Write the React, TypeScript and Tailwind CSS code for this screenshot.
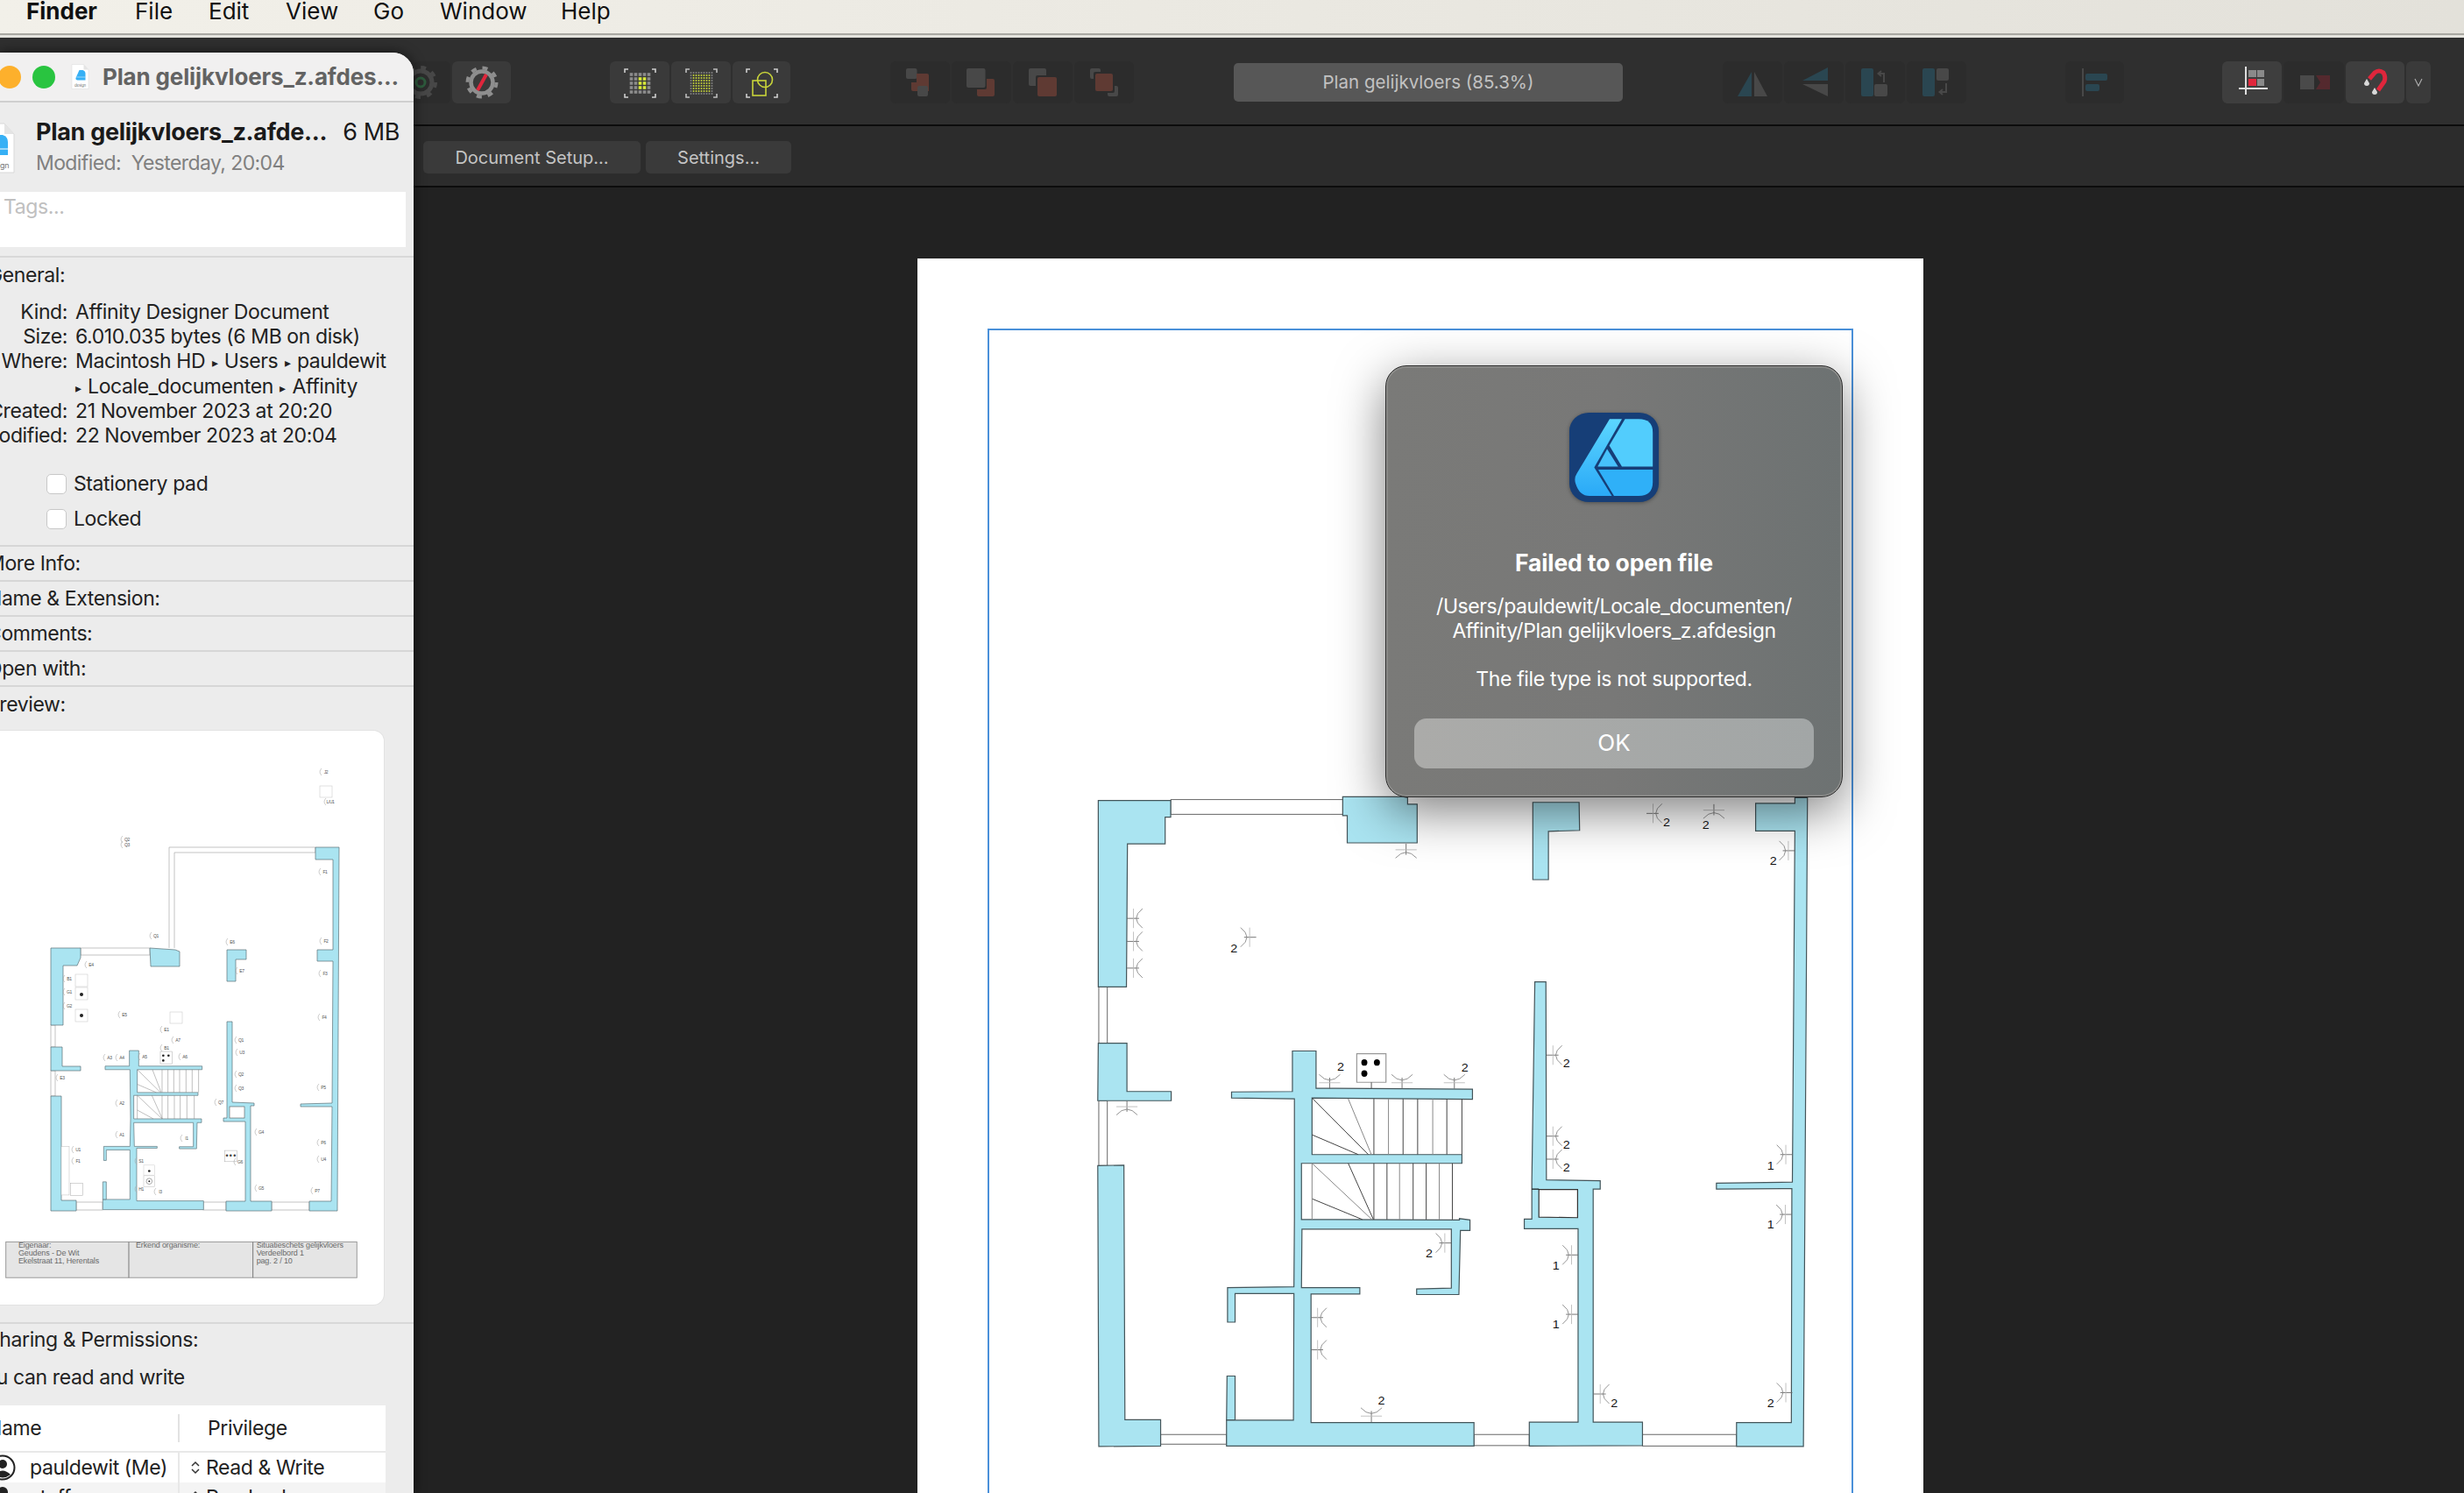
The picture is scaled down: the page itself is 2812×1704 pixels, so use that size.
import React from 'react';

const WALL = '#aae4f1';
const EDGE = '#44555a';

// main plan, coordinates read off the page at 0.574 / 0.5255 scale
const walls = [
  '93,64 237,64 237,100 226,100 226,158 151,158 149,469 93,469',
  '579,56 700,56 708,58 708,72 727,72 727,156 588,156 588,97 579,97',
  '93,591 150,591 150,696 238,696 238,716 92,716',
  '92,857 144,856 146,1409 217,1409 217,1466 94,1467',
  '349,1314 365,1314 365,1410 348,1410',
  '348,1466 840,1466 840,1415 516,1415 516,1136 613,1136 613,1122 497,1122 498,995 795,995 795,1123 726,1125 726,1137 810,1137 813,998 832,998 832,975 811,972 811,975 497,974 497,852 816,852 816,833 518,833 518,710 837,713 837,691 526,689 526,608 479,608 479,696 358,697 358,710 483,712 483,972 482,1120 350,1122 350,1197 365,1197 365,1135 482,1135 481,1410 348,1410',
  '961,458 983,458 984,888 1091,890 1091,908 1077,908 1077,1414 1175,1414 1175,1465 950,1466 950,1414 1047,1414 1047,994 940,994 940,973 955,973 955,890',
  '957,68 1049,68 1050,129 988,131 988,236 957,236',
  '1400,70 1478,70 1478,58 1503,58 1495,1467 1362,1467 1362,1415 1471,1415 1472,907 1322,908 1322,895 1473,893 1478,130 1400,130',
];

const windows = [
  [237, 62, 343, 32],
  [94, 469, 17, 122],
  [94, 716, 17, 141],
  [217, 1441, 131, 21],
  [840, 1441, 110, 24],
  [1175, 1441, 187, 25],
];

const stairLines = [
  [518, 710, 630, 833], [590, 712, 636, 833], [518, 790, 610, 833],
  [641, 712, 641, 833], [670, 712, 670, 833], [699, 712, 699, 833], [728, 712, 728, 833], [758, 712, 758, 833], [786, 712, 786, 833], [816, 712, 816, 833],
  [518, 852, 637, 974], [590, 852, 640, 974], [518, 929, 618, 974], [518, 852, 518, 974],
  [641, 852, 641, 974], [667, 852, 667, 974], [692, 852, 692, 974], [719, 852, 719, 974], [745, 852, 745, 974], [771, 852, 771, 974], [797, 852, 797, 974],
];

const sockets: { x: number; y: number; r: number; n?: string; lx?: number; ly?: number }[] = [
  { x: 150, y: 320, r: 0 }, { x: 150, y: 370, r: 0 }, { x: 150, y: 428, r: 0 },
  { x: 705, y: 158, r: 90 }, { x: 150, y: 716, r: 90 },
  { x: 407, y: 361, r: 180, n: '2', lx: 363, ly: 393 },
  { x: 553, y: 690, r: -90, n: '2', lx: 575, ly: 651 },
  { x: 697, y: 690, r: -90 },
  { x: 801, y: 690, r: -90, n: '2', lx: 822, ly: 652 },
  { x: 795, y: 1025, r: 180, n: '2', lx: 751, ly: 1056 },
  { x: 516, y: 1187, r: 0 }, { x: 516, y: 1257, r: 0 },
  { x: 636, y: 1414, r: -90, n: '2', lx: 656, ly: 1375 },
  { x: 984, y: 617, r: 0, n: '2', lx: 1024, ly: 643 },
  { x: 984, y: 793, r: 0, n: '2', lx: 1024, ly: 820 },
  { x: 984, y: 843, r: 0, n: '2', lx: 1024, ly: 870 },
  { x: 1047, y: 1051, r: 180, n: '1', lx: 1003, ly: 1083 },
  { x: 1047, y: 1180, r: 180, n: '1', lx: 1003, ly: 1210 },
  { x: 1078, y: 1353, r: 0, n: '2', lx: 1119, ly: 1381 },
  { x: 1183, y: 92, r: 0, n: '2', lx: 1223, ly: 119 },
  { x: 1317, y: 72, r: 90, n: '2', lx: 1301, ly: 126 },
  { x: 1478, y: 173, r: 180, n: '2', lx: 1435, ly: 204 },
  { x: 1473, y: 833, r: 180, n: '1', lx: 1430, ly: 865 },
  { x: 1472, y: 963, r: 180, n: '1', lx: 1430, ly: 994 },
  { x: 1473, y: 1350, r: 180, n: '2', lx: 1430, ly: 1381 },
];

function FloorPlan() {
  return (
    <svg viewBox="1047 295 1148 1409" className="block w-[1148px] h-[1409px]">
      {/* selection box */}
      <rect x="1128" y="376" width="986" height="1400" fill="none" stroke="#4a90d9" strokeWidth="2" />
      <g transform="translate(1200 880) scale(0.574 0.5255)">
        {windows.map(([x, y, w, h], i) => (
          <rect key={i} x={x} y={y} width={w} height={h} fill="#fff" stroke="#666" strokeWidth="1" vectorEffect="non-scaling-stroke" />
        ))}
        {walls.map((p, i) => (
          <polygon key={i} points={p} fill={WALL} stroke={EDGE} strokeWidth="1.2" vectorEffect="non-scaling-stroke" />
        ))}
        <polygon points="969,909 1046,909 1046,970 969,969" fill="#fff" stroke="#333" strokeWidth="1.2" vectorEffect="non-scaling-stroke" />
        <line x1="955" y1="908" x2="969" y2="908" stroke="#111" strokeWidth="1.2" vectorEffect="non-scaling-stroke" />
        {stairLines.map(([a, b, c, d], i) => (
          <line key={i} x1={a} y1={b} x2={c} y2={d} stroke={i % 3 === 1 ? '#888' : '#444'} strokeWidth="1" vectorEffect="non-scaling-stroke" />
        ))}
        <rect x="607" y="614" width="58" height="62" fill="#fff" stroke="#999" strokeWidth="1.2" vectorEffect="non-scaling-stroke" />
        <line x1="636" y1="676" x2="636" y2="690" stroke="#555" strokeWidth="1" vectorEffect="non-scaling-stroke" />
        <ellipse cx="622" cy="633" rx="6" ry="7" fill="#000" />
        <ellipse cx="647" cy="633" rx="6" ry="7" fill="#000" />
        <ellipse cx="622" cy="657" rx="6" ry="7" fill="#000" />
        {sockets.map((s, i) => (
          <g key={i}>
            <g transform={`translate(${s.x} ${s.y}) rotate(${s.r})`}>
              <line x1="0" y1="0" x2="24" y2="0" stroke="#666" strokeWidth="0.9" vectorEffect="non-scaling-stroke" />
              <line x1="13" y1="-21" x2="13" y2="21" stroke="#bbb" strokeWidth="0.9" vectorEffect="non-scaling-stroke" />
              <path d="M31 -21 Q 6 0 31 21" fill="none" stroke="#888" strokeWidth="0.9" vectorEffect="non-scaling-stroke" />
            </g>
            {s.n && (
              <text x={s.lx} y={s.ly} textAnchor="middle" fontSize="25" fill="#111" fontFamily="'Liberation Sans', sans-serif">
                {s.n}
              </text>
            )}
          </g>
        ))}
      </g>
    </svg>
  );
}

// tiny version shown inside the Get Info preview
const miniCenter = [
  '352,600 697,600 697,570 468,570 468,390 538,390 538,384 460,384 458,303 662,303 662,385 614,385 614,392 673,392 675,303 690,303 690,290 458,290 458,210 678,210 678,200 470,200 470,122 692,122 692,110 475,110 475,57 443,57 443,110 360,110 360,122 445,122 447,290 445,384 355,384 355,432 364,432 364,396 445,396 445,565 352,565',
  '352,505 364,505 364,565 352,565',
];
const miniWalls = [
  '360,967 387,967 385,1382 353,1382 353,1371 378,1371 379,1263 343,1263 343,1260 379,1259 380,1097 362,1097 362,1084 380,1084 380,981 360,981',
  '58,1082 92,1082 92,1093 88,1102 72,1102 72,1170 58,1170',
  '171,1082 200,1084 205,1086 205,1103 172,1103',
  '259,1084 281,1084 281,1095 269,1095 269,1120 259,1120',
  '259,1166 265,1166 265,1258 290,1259 290,1262 286,1262 286,1371 310,1371 310,1382 258,1382 258,1371 280,1371 280,1280 255,1280 255,1276 259,1276',
  '58,1195 71,1195 71,1217 92,1217 92,1222 58,1222',
  '58,1251 70,1251 70,1370 87,1370 87,1382 58,1382',
];
const miniStairs = [
  [470, 122, 550, 200], [522, 122, 552, 200], [470, 172, 535, 200], [555, 122, 555, 200], [575, 122, 575, 200], [595, 122, 595, 200], [615, 122, 615, 200], [637, 122, 637, 200], [658, 122, 658, 200], [680, 122, 680, 200],
  [470, 210, 555, 290], [520, 210, 556, 290], [470, 260, 525, 290], [470, 210, 470, 290], [555, 210, 555, 290], [575, 210, 575, 290], [597, 210, 597, 290], [617, 210, 617, 290], [640, 210, 640, 290], [665, 210, 665, 290],
];
const miniLabels: [number, number, string][] = [
  [372, 883, 'J2'], [377, 917, 'L/U1'], [145, 960, 'Q2'], [145, 966, 'Q3'], [178, 1070, 'Q1'], [104, 1103, 'E4'],
  [371, 997, 'F1'], [372, 1076, 'F2'], [371, 1113, 'F3'], [370, 1163, 'F4'], [265, 1077, 'E6'], [276, 1110, 'E7'], [142, 1160, 'E5'], [190, 1177, 'E1'],
  [79, 1119, 'B1'], [79, 1134, 'G1'], [79, 1150, 'G2'],
  [203, 1189, 'A7'], [190, 1198, 'B1'], [125, 1209, 'A3'], [139, 1209, 'A4'], [165, 1208, 'A5'], [211, 1208, 'A6'], [71, 1232, 'E3'],
  [275, 1189, 'Q1'], [276, 1203, 'U3'], [275, 1228, 'Q2'], [275, 1244, 'Q3'], [252, 1260, 'Q7'], [298, 1294, 'G4'], [369, 1243, 'P5'], [369, 1306, 'P6'], [369, 1325, 'U4'],
  [362, 1361, 'P7'], [139, 1261, 'A2'], [139, 1297, 'A1'], [213, 1301, 'I1'], [89, 1314, 'U1'], [89, 1327, 'F1'], [161, 1327, 'S1'], [161, 1359, 'H1'], [274, 1328, 'G6'], [298, 1358, 'G5'], [183, 1362, 'I3'],
];

function PreviewPlan() {
  return (
    <svg viewBox="0 834 438 655" className="block w-[438px] h-[655px]">
      <g fill="#fff" stroke="#aaa" strokeWidth="0.7">
        <path d="M193 1082 V967 H360 V973 H199 V1082" />
        <rect x="92" y="1082" width="79" height="8" />
        <rect x="58" y="1170" width="5" height="25" />
        <rect x="58" y="1222" width="5" height="29" />
        <rect x="87" y="1372" width="30" height="9" />
        <rect x="232" y="1372" width="26" height="9" />
        <rect x="310" y="1372" width="43" height="9" />
      </g>
      {miniWalls.map((p, i) => (
        <polygon key={i} points={p} fill={WALL} stroke="#5b7075" strokeWidth="0.7" />
      ))}
      <rect x="262" y="1263" width="17" height="13" fill="#fff" stroke="#555" strokeWidth="0.6" />
      <g transform="translate(0 1180) scale(0.3333 0.3344)">
        {miniCenter.map((p, i) => (
          <polygon key={i} points={p} fill={WALL} stroke="#5b7075" strokeWidth="2" />
        ))}
        {miniStairs.map(([a, b, c, d], i) => (
          <line key={i} x1={a} y1={b} x2={c} y2={d} stroke="#888" strokeWidth="1.6" />
        ))}
        <rect x="549" y="60" width="40" height="42" fill="#fff" stroke="#aaa" strokeWidth="1.5" />
        <circle cx="559" cy="74" r="4" fill="#222" /><circle cx="577" cy="74" r="4" fill="#222" /><circle cx="559" cy="91" r="4" fill="#222" />
        <rect x="210" y="385" width="27" height="165" fill="#fff" stroke="#bbb" strokeWidth="1.5" />
        <rect x="241" y="510" width="43" height="42" fill="#fff" stroke="#aaa" strokeWidth="1.5" />
        <rect x="492" y="484" width="38" height="38" fill="#fff" stroke="#bbb" strokeWidth="1.5" />
        <circle cx="511" cy="503" r="10" fill="none" stroke="#555" strokeWidth="1.5" /><circle cx="511" cy="503" r="3" fill="#222" />
        <rect x="492" y="448" width="38" height="34" fill="#fff" stroke="#ccc" strokeWidth="1.5" />
        <circle cx="511" cy="468" r="4" fill="#222" />
        <rect x="769" y="398" width="42" height="38" fill="#fff" stroke="#aaa" strokeWidth="1.5" />
        <text x="790" y="423" textAnchor="middle" fontSize="24" fill="#444">•••</text>
        {/* title block */}
        <rect x="20" y="710" width="1202" height="122" fill="#e5e5e5" stroke="#9a9a9a" strokeWidth="3" />
        <line x1="441" y1="710" x2="441" y2="832" stroke="#777" strokeWidth="3" />
        <line x1="866" y1="710" x2="866" y2="832" stroke="#777" strokeWidth="3" />
        <g fontSize="27" fill="#6a6a6a" fontFamily="'Liberation Sans', sans-serif">
          <text x="63" y="731">Eigenaar:</text>
          <text x="63" y="758">Geudens - De Wit</text>
          <text x="63" y="785">Ekelstraat 11, Herentals</text>
          <text x="465" y="729">Erkend organisme:</text>
          <text x="878" y="731">Situatieschets gelijkvloers</text>
          <text x="878" y="757">Verdeelbord 1</text>
          <text x="878" y="784">pag. 2 / 10</text>
        </g>
      </g>
      <g fill="#fff" stroke="#ccc" strokeWidth="0.6">
        <rect x="86" y="1112" width="14" height="14" />
        <rect x="86" y="1127" width="14" height="14" />
        <rect x="86" y="1152" width="14" height="14" />
        <rect x="194" y="1155" width="14" height="13" />
        <rect x="365" y="897" width="14" height="13" />
      </g>
      <circle cx="93" cy="1135" r="2" fill="#222" />
      <circle cx="93" cy="1159" r="2" fill="#222" />
      <g fontSize="5" fill="#555" fontFamily="'Liberation Sans', sans-serif">
        {miniLabels.map(([x, y, t], i) => (
          <text key={i} x={x} y={y} textAnchor="middle">{t}</text>
        ))}
      </g>
      <g fill="none" stroke="#aaa" strokeWidth="0.6">
        {miniLabels.map(([x, y], i) => (
          <path key={i} d={`M${x - 5} ${y - 6} q -4 4 0 8`} />
        ))}
      </g>
    </svg>
  );
}

function AffinityLogo() {
  return (
    <svg viewBox="648 213 284 305" preserveAspectRatio="none" className="w-[102px] h-[102px] drop-shadow-[0_1px_2px_rgba(0,0,0,0.35)]">
      <defs>
        <linearGradient id="aff" x1="0" y1="0" x2="0" y2="1">
          <stop offset="0" stopColor="#5cd6ff" />
          <stop offset="1" stopColor="#2aa9f7" />
        </linearGradient>
      </defs>
      <rect x="648" y="213" width="284" height="305" rx="62" ry="62" fill="#163e77" />
      <path d="M776 235 H815 L727 400 L783 497 H712 Q680 497 668 455 Q662 436 672 420 Z" fill="url(#aff)" />
      <path d="M825 235 H868 Q913 235 913 280 V397 H815 L775 325 Z" fill="#52cdfd" />
      <path d="M768 337 L803 397 H738 Z" fill="#47c1fb" />
      <path d="M740 407 H913 V450 Q913 497 868 497 H790 Z" fill="#2fb0f8" />
    </svg>
  );
}

function DocIcon({ small }: { small?: boolean }) {
  return (
    <svg viewBox="0 0 40 58" className={small ? 'w-[21px] h-[29px]' : 'w-[40px] h-[58px]'}>
      <path d="M1 1 H28 L39 13 V57 H1 Z" fill="#fff" stroke="#d8d8d8" strokeWidth="1" />
      <path d="M28 1 V13 H39 Z" fill="#e4e4e4" />
      <path d="M18 14 L10 32 Q9 36 14 37 H32 V22 Q32 16 26 14 Z" fill="#36b0f5" />
      <path d="M12 30 H32" stroke="#fff" strokeWidth="1" />
      <text x="20" y="52" textAnchor="middle" fontSize="9" fill="#777" fontFamily="'Inter', sans-serif">design</text>
    </svg>
  );
}

function ToolBtn({ w, tone = 'on', children }: { w: string; tone?: 'on' | 'off' | 'bright'; children?: React.ReactNode }) {
  const bg = tone === 'off' ? 'bg-[#2c2c2c]' : tone === 'bright' ? 'bg-[#3e3e3e]' : 'bg-[#3a3a3a]';
  return (
    <div className={`${w} h-[48px] rounded-[6px] flex items-center justify-center ${bg}`}>
      <svg viewBox="0 0 68 48" className="w-[68px] h-[48px] shrink-0">{children}</svg>
    </div>
  );
}

const GRAY = '#484848';
const RED = '#5f3a33';
const TEAL = '#2a4651';

function Corners({ c = '#cfcfcf' }: { c?: string }) {
  return (
    <path d="M17 13 V9 H21 M48 9 H52 V13 M17 37 V41 H21 M48 41 H52 V37" fill="none" stroke={c} strokeWidth="1.6" />
  );
}

function Dots({ fine }: { fine?: boolean }) {
  const n = fine ? 9 : 5;
  const step = fine ? 3 : 5;
  const size = fine ? 1.6 : 3.6;
  const start = 34.5 - (step * (n - 1)) / 2 - size / 2;
  const cells = [];
  for (let i = 0; i < n; i++) {
    for (let j = 0; j < n; j++) {
      const edge = i === 0 || j === 0 || i === n - 1 || j === n - 1;
      const lit = fine ? !edge : i > 0 && i < 4 && j > 1 && j < 4;
      cells.push(
        <rect key={`${i}-${j}`} x={start + j * step} y={start - 9.5 + i * step} width={size} height={size} fill={lit ? '#d8e83a' : '#8c8c8c'} />
      );
    }
  }
  return <>{cells}</>;
}

function Toolbar() {
  return (
    <div className="h-[101px] bg-[#2f2f2f] border-b-2 border-[#0c0c0c] flex items-start pl-[472px] pt-[27px] shrink-0">
      <div className="flex gap-[2px]">
        <ToolBtn w="w-[42px]" tone="off">
          <g transform="translate(21 24)" opacity="0.6">
            <circle r="13" fill="none" stroke="#5a5a5a" strokeWidth="5" />
            <circle r="17" fill="none" stroke="#5a5a5a" strokeWidth="4" strokeDasharray="6 7.3" />
            <circle r="5" fill="none" stroke="#2f7a48" strokeWidth="3" />
          </g>
        </ToolBtn>
        <ToolBtn w="w-[67px]">
          <g transform="translate(34 24)">
            <circle r="12.5" fill="none" stroke="#8e8e8e" strokeWidth="4.5" />
            <circle r="16.5" fill="none" stroke="#8e8e8e" strokeWidth="4" strokeDasharray="6 6.96" />
            <line x1="-5" y1="9" x2="5" y2="-9" stroke="#e0263c" strokeWidth="4" />
          </g>
        </ToolBtn>
      </div>
      <div className="flex gap-[2px] ml-[113px]">
        <ToolBtn w="w-[68px]"><Corners /><Dots /></ToolBtn>
        <ToolBtn w="w-[68px]"><Corners c="#bdbdbd" /><Dots fine /></ToolBtn>
        <ToolBtn w="w-[66px]">
          <Corners />
          <rect x="24" y="22" width="15" height="17" fill="none" stroke="#c8d43a" strokeWidth="1.6" />
          <circle cx="38" cy="21" r="8.5" fill="none" stroke="#c8d43a" strokeWidth="1.6" />
        </ToolBtn>
      </div>
      <div className="flex gap-[2px] ml-[114px]">
        <ToolBtn w="w-[68px]" tone="off">
          <rect x="18" y="8" width="12.5" height="12" rx="2" fill={GRAY} />
          <path d="M30 14 H42 Q44 14 44 16 V34 H26 Q24 34 24 32 V24 H30 Z" fill={RED} />
          <rect x="31" y="28" width="12" height="12" rx="2" fill={GRAY} />
        </ToolBtn>
        <ToolBtn w="w-[68px]" tone="off">
          <rect x="29" y="20" width="20" height="20" rx="2" fill={RED} />
          <rect x="15" y="6" width="25" height="26" rx="2" fill="#2c2c2c" />
          <rect x="17" y="8" width="21.5" height="22" rx="2" fill={GRAY} />
        </ToolBtn>
        <ToolBtn w="w-[68px]" tone="off">
          <rect x="18" y="8" width="20" height="20" rx="2" fill={GRAY} />
          <rect x="26" y="16" width="26" height="26" rx="2" fill="#2c2c2c" />
          <rect x="28" y="18" width="22" height="22" rx="2" fill={RED} />
        </ToolBtn>
        <ToolBtn w="w-[68px]" tone="off">
          <rect x="18" y="8" width="12" height="12" rx="2" fill={GRAY} />
          <rect x="38" y="28" width="12" height="12" rx="2" fill={GRAY} />
          <rect x="22" y="12" width="24" height="24" rx="2" fill="#2c2c2c" />
          <rect x="24" y="14" width="20" height="20" rx="2" fill={RED} />
        </ToolBtn>
      </div>
      <div className="w-[444px] h-[44px] mt-[2px] ml-[114px] rounded-[5px] bg-[#575757] text-[#c2c2c2] text-[20.5px] flex items-center justify-center">
        Plan gelijkvloers (85.3%)
      </div>
      <div className="flex gap-[2px] ml-[114px]">
        <ToolBtn w="w-[68px]" tone="off">
          <path d="M33 12 V40 H17 Z" fill={TEAL} />
          <path d="M36 12 V40 H51 Z" fill={GRAY} />
        </ToolBtn>
        <ToolBtn w="w-[68px]" tone="off">
          <path d="M50 7 V22 H21 Z" fill={TEAL} />
          <path d="M21 26 H50 V40 Z" fill={GRAY} />
        </ToolBtn>
        <ToolBtn w="w-[68px]" tone="off">
          <rect x="18" y="8" width="14" height="32" rx="2" fill={TEAL} />
          <rect x="33" y="26" width="15" height="14" rx="2" fill={GRAY} />
          <path d="M44 24 V14 H38 M41 11 L37.5 14 L41 17" fill="none" stroke={GRAY} strokeWidth="2" />
        </ToolBtn>
        <ToolBtn w="w-[68px]" tone="off">
          <rect x="18" y="8" width="14" height="32" rx="2" fill={TEAL} />
          <rect x="34" y="8" width="14" height="14" rx="2" fill={GRAY} />
          <path d="M45 25 V35 H38 M41 32 L37.5 35 L41 38" fill="none" stroke={GRAY} strokeWidth="2" />
        </ToolBtn>
      </div>
      <div className="ml-[113px]">
        <ToolBtn w="w-[67px]" tone="off">
          <line x1="20" y1="8" x2="20" y2="40" stroke={GRAY} strokeWidth="2" />
          <rect x="23" y="14" width="25" height="8" rx="2" fill={TEAL} />
          <rect x="23" y="26" width="16" height="8" rx="2" fill={TEAL} />
        </ToolBtn>
      </div>
      <div className="flex gap-[2px] ml-[112px]">
        <ToolBtn w="w-[68px]" tone="bright">
          <rect x="30" y="10" width="9" height="8" fill="#8a8a8a" />
          <rect x="40" y="10" width="8" height="8" fill="#8a8a8a" />
          <rect x="30" y="20" width="9" height="8" fill="#e0263c" />
          <rect x="40" y="20" width="8" height="8" fill="#8a8a8a" />
          <line x1="27" y1="6" x2="27" y2="38" stroke="#dedede" strokeWidth="2" />
          <line x1="19" y1="31" x2="52" y2="31" stroke="#dedede" strokeWidth="2" />
        </ToolBtn>
        <ToolBtn w="w-[69px]" tone="off">
          <rect x="18" y="16" width="16" height="16" fill="#4a4a4a" />
          <path d="M36 16 H52 V32 H36 L41 24 Z" fill="#54292e" />
        </ToolBtn>
        <ToolBtn w="w-[67px]" tone="bright">
          <path d="M27 20 L33 13 Q38 9 43 13 Q46 18 44 23 L37 33" fill="none" stroke="#e0263c" strokeWidth="5" />
          <path d="M24 20 L27 25 A3 3 0 0 1 21 25 Z" fill="#d8d8d8" />
          <path d="M33 30 L36 35 A3 3 0 0 1 30 35 Z" fill="#d8d8d8" />
        </ToolBtn>
        <div className="w-[28px] h-[48px] rounded-[6px] bg-[#3a3a3a] flex items-center justify-center">
          <svg viewBox="0 0 10 10" className="w-[10px] h-[10px]">
            <path d="M1 1 L5 9 L9 1" fill="none" stroke="#b0b0b0" strokeWidth="1.1" />
          </svg>
        </div>
      </div>
    </div>
  );
}

function MenuBar() {
  const items: [string, string][] = [['File', 'w-[84px]'], ['Edit', 'w-[88px]'], ['View', 'w-[100px]'], ['Go', 'w-[76px]'], ['Window', 'w-[138px]'], ['Help', 'w-[80px]']];
  return (
    <div className="shrink-0">
      <div className="h-[38px] bg-linear-to-r from-[#f2f0e9] to-[#e3e1da] flex items-start pl-[30px] text-[26px] leading-[26px] text-[#111]">
        <div className="w-[124px] font-bold">Finder</div>
        {items.map(([label, w]) => (
          <div key={label} className={w}>{label}</div>
        ))}
      </div>
      <div className="h-[2px] bg-[#a9a8a2]" />
      <div className="h-[3px] bg-[#e4e3dd]" />
    </div>
  );
}

function Row({ label, children }: { label?: string; children: React.ReactNode }) {
  return (
    <div className="flex h-[28.2px] leading-[28.2px] whitespace-nowrap">
      <div className="w-[77px] flex justify-end">{label}</div>
      <div className="ml-[9px]">{children}</div>
    </div>
  );
}

const Arrow = ({ lead }: { lead?: boolean }) => (
  <span className={`text-[14px] align-[1px] mr-[7.5px] ${lead ? '' : 'ml-[7.5px]'}`}>▸</span>
);

function Section({ label }: { label: string }) {
  return (
    <div className="h-[40px] border-b-2 border-[#d6d6d6] leading-[39px] whitespace-nowrap">
      <span className="ml-[-15px]">{label}</span>
    </div>
  );
}

function Check({ label, cls }: { label: string; cls: string }) {
  return (
    <div className={`flex items-center h-[28px] pl-[53px] ${cls}`}>
      <div className="w-[23px] h-[23px] rounded-[5px] bg-white border border-[#c8c8c8]" />
      <span className="ml-[8px]">{label}</span>
    </div>
  );
}

function Stepper() {
  return (
    <svg viewBox="0 0 10 16" className="w-[10px] h-[16px] shrink-0">
      <path d="M1 6 L5 2 L9 6 M1 10 L5 14 L9 10" fill="none" stroke="#333" strokeWidth="1.5" />
    </svg>
  );
}

function InfoWindow() {
  return (
    <div className="absolute left-0 top-[60px] bottom-0 w-[472px] rounded-tr-[24px] overflow-hidden bg-[#ececec] text-[23px] tracking-[-0.4px] text-[#222] shadow-[0_0_14px_rgba(0,0,0,0.6)]">
      {/* title bar */}
      <div className="h-[57px] bg-[#f1f0f0] border-b-2 border-[#cfcfcf] flex items-center relative">
        <div className="absolute left-[-2px] w-[26px] h-[26px] rounded-full bg-[#fdb02c]" />
        <div className="absolute left-[37px] w-[26px] h-[26px] rounded-full bg-[#29c440]" />
        <div className="absolute left-[81px]"><DocIcon small /></div>
        <div className="ml-[117px] font-bold text-[26px] tracking-[-0.15px] text-[#636363] whitespace-nowrap">Plan gelijkvloers_z.afdes...</div>
      </div>
      {/* header */}
      <div className="h-[102px] pt-[17px] pl-[41px] pr-[16px] relative">
        <div className="absolute left-[-23px] top-[23px]"><DocIcon /></div>
        <div className="flex justify-between text-[27px] leading-[34px] text-[#1a1a1a]">
          <span className="font-bold tracking-[-0.3px] whitespace-nowrap">Plan gelijkvloers_z.afde...</span>
          <span>6 MB</span>
        </div>
        <div className="text-[#808080] leading-[37px] tracking-[-0.6px]">Modified:&nbsp; Yesterday, 20:04</div>
      </div>
      <div className="h-[63px] w-[463px] bg-white pl-[4px] text-[#c0c0c0] leading-[34px]">Tags...</div>
      <div className="mt-[10px] h-[2px] bg-[#d8d8d8]" />
      <div className="mt-[6px] h-[28px] leading-[28px]"><span className="ml-[-14px]">General:</span></div>
      <div className="mt-[14px]">
        <Row label="Kind:">Affinity Designer Document</Row>
        <Row label="Size:">6.010.035 bytes (6 MB on disk)</Row>
        <Row label="Where:">Macintosh HD<Arrow />Users<Arrow />pauldewit</Row>
        <Row><Arrow lead />Locale_documenten<Arrow />Affinity</Row>
        <Row label="Created:">21 November 2023 at 20:20</Row>
        <Row label="Modified:">22 November 2023 at 20:04</Row>
      </div>
      <Check label="Stationery pad" cls="mt-[27px]" />
      <Check label="Locked" cls="mt-[12px]" />
      <div className="mt-[16px] h-[2px] bg-[#d6d6d6]" />
      <Section label="More Info:" />
      <Section label="Name & Extension:" />
      <Section label="Comments:" />
      <Section label="Open with:" />
      <div className="h-[42px] leading-[41px]"><span className="ml-[-15px]">Preview:</span></div>
      {/* preview card */}
      <div className="mt-[8px] w-[438px] h-[655px] bg-white rounded-r-[12px] overflow-hidden shadow-[0_0_0_1px_#e2e2e2]">
        <PreviewPlan />
      </div>
      <div className="mt-[20px] h-[2px] bg-[#d8d8d8]" />
      <div className="mt-[4px] h-[28px] leading-[28px] whitespace-nowrap"><span className="ml-[-15px]">Sharing &amp; Permissions:</span></div>
      <div className="mt-[15px] h-[28px] leading-[28px] whitespace-nowrap"><span className="ml-[-31px]">You can read and write</span></div>
      {/* permissions table */}
      <div className="mt-[18px] w-[440px] bg-white">
        <div className="h-[52px] flex items-center">
          <div className="w-[205px] h-[32px] border-r-2 border-[#e2e2e2] leading-[32px]"><span className="ml-[-15px]">Name</span></div>
          <div className="ml-[32px]">Privilege</div>
        </div>
        <div className="h-[2px] bg-[#e8e8e8]" />
        <div className="h-[34px] flex items-center">
          <div className="w-[205px] h-[34px] border-r-2 border-[#e8e8e8] flex items-center">
            <svg viewBox="0 0 30 30" className="w-[30px] h-[30px] ml-[-12px] shrink-0">
              <circle cx="15" cy="15" r="13.5" fill="none" stroke="#222" strokeWidth="2" />
              <circle cx="15" cy="11" r="5" fill="#222" />
              <path d="M6 23 Q15 14 24 23 Q15 30 6 23 Z" fill="#222" />
            </svg>
            <span className="ml-[16px] whitespace-nowrap">pauldewit (Me)</span>
          </div>
          <div className="ml-[13px]"><Stepper /></div>
          <span className="ml-[7px] whitespace-nowrap">Read &amp; Write</span>
        </div>
        <div className="h-[34px] bg-[#f4f4f4] flex items-center">
          <div className="w-[205px] h-[34px] border-r-2 border-[#e8e8e8] flex items-center">
            <svg viewBox="0 0 30 30" className="w-[30px] h-[30px] ml-[-12px] shrink-0">
              <circle cx="15" cy="9" r="6" fill="#222" />
              <path d="M3 30 Q15 12 27 30 Z" fill="#222" />
            </svg>
            <span className="ml-[16px] whitespace-nowrap">staff</span>
          </div>
          <div className="ml-[13px]"><Stepper /></div>
          <span className="ml-[7px] whitespace-nowrap">Read only</span>
        </div>
      </div>
    </div>
  );
}

function FailDialog() {
  return (
    <div className="absolute left-[1581px] top-[417px] w-[522px] h-[493px] rounded-[24px] border-[1.5px] border-[#2a2a2a] bg-linear-to-r from-[#7a7a78] via-[#787877] to-[#6d7272] shadow-[inset_0_0_0_1.5px_#8f8f8d,0_16px_56px_rgba(0,0,0,0.5)] flex flex-col items-center text-white">
      <div className="mt-[53px]"><AffinityLogo /></div>
      <div className="mt-[53px] text-[26.5px] leading-[32px] font-bold tracking-[-0.1px]">Failed to open file</div>
      <div className="mt-[21px] text-[23px] leading-[27.5px] tracking-[-0.42px] text-center">
        /Users/pauldewit/Locale_documenten/<br />Affinity/Plan gelijkvloers_z.afdesign
      </div>
      <div className="mt-[27px] text-[23px] leading-[28px] tracking-[-0.35px]">The file type is not supported.</div>
      <div className="mt-[31px] w-[456px] h-[57px] rounded-[14px] bg-linear-to-r from-[#ababa9] to-[#a2a6a6] flex items-center justify-center text-[26px] pb-[2px]">OK</div>
    </div>
  );
}

export default function App() {
  return (
    <div className="relative w-[2812px] h-[1704px] overflow-hidden flex flex-col bg-[#222222] font-['Inter','Liberation_Sans',sans-serif]">
      <MenuBar />
      <Toolbar />
      {/* context bar */}
      <div className="h-[70px] bg-[#2c2c2c] border-b-2 border-[#0c0c0c] flex items-start pl-[483px] pt-[17px] gap-[6px] shrink-0 text-[20px] text-[#c4c4c4]">
        <div className="w-[248px] h-[37px] rounded-[5px] bg-[#3a3a3a] flex items-center justify-center">Document Setup...</div>
        <div className="w-[166px] h-[37px] rounded-[5px] bg-[#3a3a3a] flex items-center justify-center">Settings...</div>
      </div>
      {/* canvas */}
      <div className="flex-1 pl-[1047px] pt-[81px] overflow-hidden">
        <div className="w-[1148px] h-[1409px] bg-white">
          <FloorPlan />
        </div>
      </div>
      <InfoWindow />
      <FailDialog />
    </div>
  );
}
